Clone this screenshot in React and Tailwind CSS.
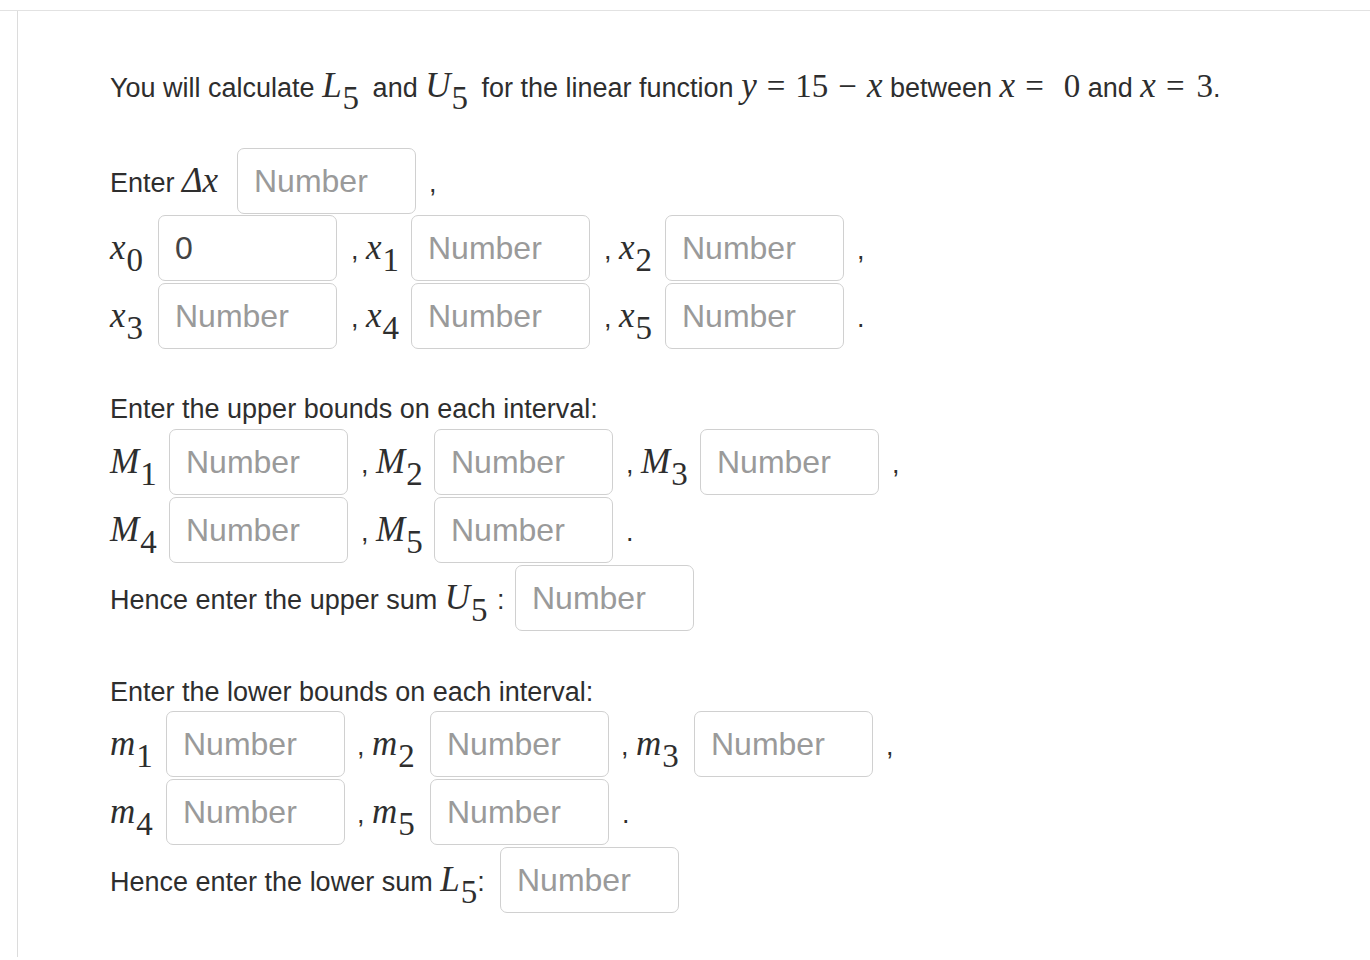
import React from "react";

// variable with a (large, MathJax-like) subscript
const V = ({ v, s }) => (
  <span className="font-['Liberation_Serif',serif] text-[35px] whitespace-nowrap">
    <i>{v}</i>
    {s && <span className="not-italic text-[33px] align-[-12px] ml-[1px]">{s}</span>}
  </span>
);

const S = ({ children, cls = "" }) => (
  <span className={`font-['Liberation_Serif',serif] text-[33px] ${cls}`}>{children}</span>
);

const Num = ({ value }) => (
  <input
    type="text"
    placeholder="Number"
    defaultValue={value}
    className="w-[179px] h-[66px] shrink-0 border border-[#d0d0d0] rounded-[7px] bg-white px-[16px] text-[32px] text-[#444] placeholder:text-[#9a9a9a] font-['Liberation_Sans',Arial,sans-serif] outline-none"
  />
);

const Lead = ({ w, pl, children }) => (
  <span className={`inline-block shrink-0 whitespace-nowrap ${w} ${pl}`}>{children}</span>
);

const Tail = ({ c }) => <span className="ml-[13px]">{c}</span>;

const App = () => {
  return (
    <div className="min-h-screen bg-white text-[#2e2e2e] text-[27px] font-['Liberation_Sans',Arial,sans-serif] pt-[10px]">
      <div className="border-t border-[#e2e2e2]">
        <div className="ml-[17px] min-h-[946px] border-l border-[#dcdcdc] pl-[92px] pt-[55px] pb-[40px]">
          {/* intro */}
          <p className="h-[40px] leading-[40px] whitespace-nowrap">
            You will calculate <V v="L" s="5" /> <span className="ml-[6px]">and</span>{" "}
            <V v="U" s="5" /> <span className="ml-[6px]">for the linear function</span>{" "}
            <V v="y" />
            <S cls="ml-[10px] mr-[10px]">=</S>
            <S>15</S>
            <S cls="ml-[10px] mr-[10px]">−</S>
            <V v="x" /> between <V v="x" />
            <S cls="ml-[10px] mr-[20px]">=</S>
            <S>0</S> and <V v="x" />
            <S cls="ml-[10px] mr-[12px]">=</S>
            <S>3</S>.
          </p>

          {/* delta x */}
          <div className="mt-[42px] h-[66px] flex items-baseline">
            <Lead w="w-[127px]" pl="">
              Enter <span className="font-['Liberation_Serif',serif] text-[35px] italic">Δx</span>
            </Lead>
            <Num />
            <Tail c="," />
          </div>

          {/* x values */}
          <div className="mt-[1px] h-[66px] flex items-baseline">
            <Lead w="w-[48px]" pl=""><V v="x" s="0" /></Lead>
            <Num value="0" />
            <Lead w="w-[74px]" pl="pl-[14px]">, <V v="x" s="1" /></Lead>
            <Num />
            <Lead w="w-[75px]" pl="pl-[14px]">, <V v="x" s="2" /></Lead>
            <Num />
            <Tail c="," />
          </div>
          <div className="mt-[2px] h-[66px] flex items-baseline">
            <Lead w="w-[48px]" pl=""><V v="x" s="3" /></Lead>
            <Num />
            <Lead w="w-[74px]" pl="pl-[14px]">, <V v="x" s="4" /></Lead>
            <Num />
            <Lead w="w-[75px]" pl="pl-[14px]">, <V v="x" s="5" /></Lead>
            <Num />
            <Tail c="." />
          </div>

          {/* upper bounds */}
          <p className="mt-[40px] h-[40px] leading-[40px]">Enter the upper bounds on each interval:</p>
          <div className="h-[66px] flex items-baseline">
            <Lead w="w-[59px]" pl=""><V v="M" s="1" /></Lead>
            <Num />
            <Lead w="w-[86px]" pl="pl-[13px]">, <V v="M" s="2" /></Lead>
            <Num />
            <Lead w="w-[87px]" pl="pl-[13px]">, <V v="M" s="3" /></Lead>
            <Num />
            <Tail c="," />
          </div>
          <div className="mt-[2px] h-[66px] flex items-baseline">
            <Lead w="w-[59px]" pl=""><V v="M" s="4" /></Lead>
            <Num />
            <Lead w="w-[86px]" pl="pl-[13px]">, <V v="M" s="5" /></Lead>
            <Num />
            <Tail c="." />
          </div>
          <div className="mt-[2px] h-[66px] flex items-baseline">
            <Lead w="w-[405px]" pl="">
              Hence enter the upper sum <V v="U" s="5" /> <span className="ml-[2px]">:</span>
            </Lead>
            <Num />
          </div>

          {/* lower bounds */}
          <p className="mt-[41px] h-[39px] leading-[40px]">Enter the lower bounds on each interval:</p>
          <div className="h-[66px] flex items-baseline">
            <Lead w="w-[56px]" pl=""><V v="m" s="1" /></Lead>
            <Num />
            <Lead w="w-[85px]" pl="pl-[12px]">, <V v="m" s="2" /></Lead>
            <Num />
            <Lead w="w-[85px]" pl="pl-[12px]">, <V v="m" s="3" /></Lead>
            <Num />
            <Tail c="," />
          </div>
          <div className="mt-[2px] h-[66px] flex items-baseline">
            <Lead w="w-[56px]" pl=""><V v="m" s="4" /></Lead>
            <Num />
            <Lead w="w-[85px]" pl="pl-[12px]">, <V v="m" s="5" /></Lead>
            <Num />
            <Tail c="." />
          </div>
          <div className="mt-[2px] h-[66px] flex items-baseline">
            <Lead w="w-[390px]" pl="">
              Hence enter the lower sum <V v="L" s="5" />:
            </Lead>
            <Num />
          </div>
        </div>
      </div>
    </div>
  );
};

export default App;
